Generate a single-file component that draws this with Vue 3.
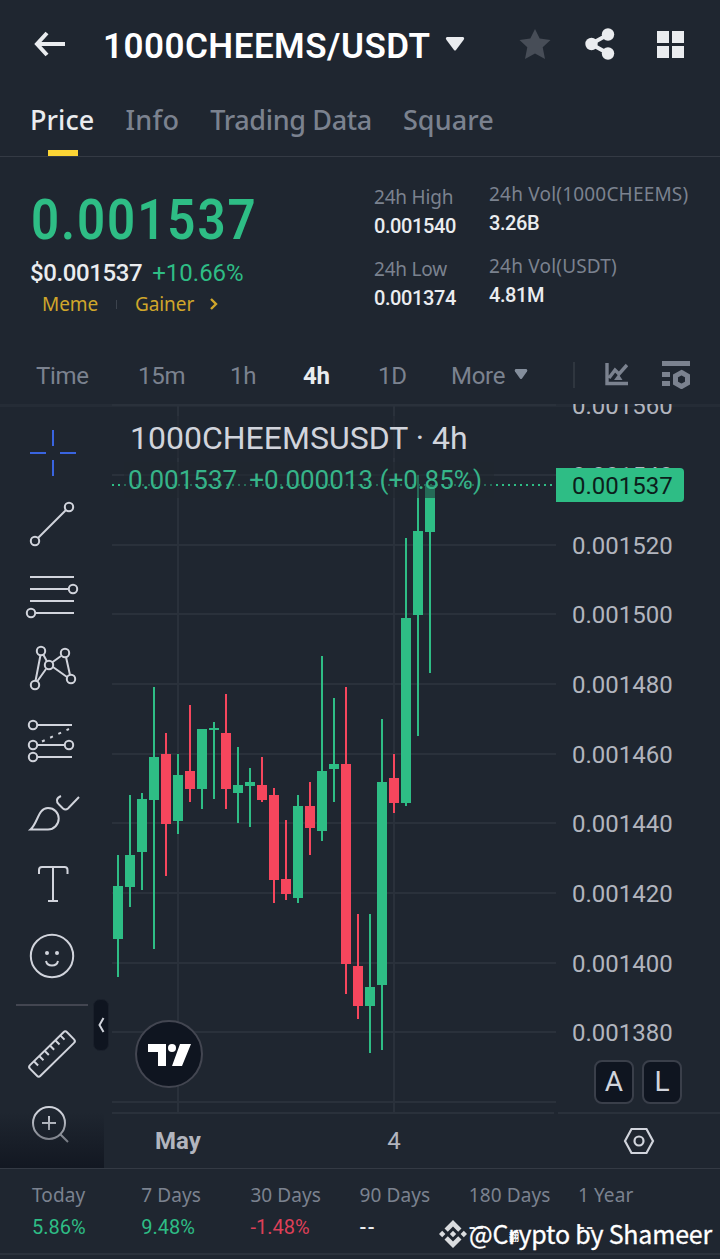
<script setup>
const tabs = ['Price', 'Info', 'Trading Data', 'Square']
const intervals = ['Time', '15m', '1h', '4h', '1D']

const stats = [
  { label: '24h High', value: '0.001540' },
  { label: '24h Vol(1000CHEEMS)', value: '3.26B' },
  { label: '24h Low', value: '0.001374' },
  { label: '24h Vol(USDT)', value: '4.81M' },
]

const performance = [
  { label: 'Today', value: '5.86%', tone: 'up' },
  { label: '7 Days', value: '9.48%', tone: 'up' },
  { label: '30 Days', value: '-1.48%', tone: 'down' },
  { label: '90 Days', value: '--', tone: 'flat' },
  { label: '180 Days', value: '--', tone: 'flat' },
  { label: '1 Year', value: '--', tone: 'flat' },
]

const priceLines = [
  { y: 1, label: '0.001560' },
  { y: 71, label: '0.001540' },
  { y: 141, label: '0.001520' },
  { y: 210, label: '0.001500' },
  { y: 280, label: '0.001480' },
  { y: 350, label: '0.001460' },
  { y: 419, label: '0.001440' },
  { y: 489, label: '0.001420' },
  { y: 559, label: '0.001400' },
  { y: 628, label: '0.001380' },
  { y: 698, label: '' },
]

// [rising, wick top, body top, body bottom, wick bottom]
const candles = [
  [1, 451, 482, 535, 573],
  [1, 391, 451, 483, 503],
  [1, 389, 395, 448, 486],
  [1, 283, 353, 396, 545],
  [0, 329, 350, 420, 472],
  [1, 350, 371, 417, 430],
  [0, 301, 367, 385, 398],
  [1, 325, 325, 385, 405],
  [1, 318, 324, 326, 395],
  [0, 290, 329, 385, 405],
  [1, 343, 381, 389, 419],
  [1, 364, 378, 382, 423],
  [0, 353, 381, 396, 398],
  [0, 384, 391, 476, 499],
  [0, 416, 475, 490, 496],
  [1, 391, 402, 494, 499],
  [0, 378, 402, 424, 451],
  [1, 252, 367, 427, 437],
  [1, 294, 360, 365, 398],
  [0, 283, 360, 560, 590],
  [0, 510, 562, 602, 615],
  [1, 510, 583, 602, 649],
  [1, 315, 378, 581, 646],
  [0, 350, 374, 399, 409],
  [1, 134, 214, 399, 402],
  [1, 71, 127, 211, 332],
  [1, 81, 81, 128, 269],
].map(([up, high, top, bottom, low], i) => ({
  x: 14 + i * 12,
  color: up ? '#2ebd85' : '#f6465d',
  high,
  top,
  bottom,
  low,
}))
</script>

<template>
  <div class="screen">
    <header class="header">
      <svg class="back" width="32" height="26" viewBox="0 0 32 26">
        <path d="M31 13H4M13 2L3 13l10 11" fill="none" stroke="#eaecef" stroke-width="4" />
      </svg>
      <h1 class="pair">1000CHEEMS/USDT</h1>
      <svg class="caret" width="20" height="14" viewBox="0 0 20 14">
        <path d="M2 0h16q2 1 .5 3L11 13q-1 1-2 0L1.500 3Q0 1 2 0z" fill="#eaecef" />
      </svg>
      <svg class="star" width="32" height="32" viewBox="0 0 32 32">
        <path d="M16 1l4.700 9.600 10.800 1.300-7.800 7.400 2.300 11.700-10-5.500-10 5.500 2.300-11.700L.5 11.900l10.800-1.300z" fill="#474d57" />
      </svg>
      <svg class="share" width="30" height="32" viewBox="0 0 30 32">
        <path d="M24 6L6 16l18 10" fill="none" stroke="#eaecef" stroke-width="4" />
        <circle cx="6.500" cy="16" r="6.200" fill="#eaecef" />
        <circle cx="23" cy="6.500" r="6.200" fill="#eaecef" />
        <circle cx="23" cy="25.500" r="6.200" fill="#eaecef" />
      </svg>
      <svg class="apps" width="27" height="27" viewBox="0 0 27 27" fill="#eaecef">
        <path d="M0 0h12v12H0zM15 0h12v12H15zM0 15h12v12H0zM15 15h12v12H15z" />
      </svg>
    </header>

    <nav class="tabs">
      <span v-for="(tab, i) in tabs" :key="tab" class="tab" :class="{ active: i === 0 }">{{ tab }}</span>
    </nav>

    <section class="summary">
      <div class="quote">
        <div class="last">0.001537</div>
        <div class="fiat">
          <span>$0.001537</span>
          <span class="change">+10.66%</span>
        </div>
        <div class="tags">
          <span class="meme">Meme</span>
          <i class="tag-divider"></i>
          <span>Gainer</span>
          <svg width="8" height="12" viewBox="0 0 8 12">
            <path d="M1 1l5 5-5 5" fill="none" stroke="#d0a62b" stroke-width="2.400" />
          </svg>
        </div>
      </div>
      <dl class="stats">
        <div v-for="stat in stats" :key="stat.label" class="stat">
          <dt>{{ stat.label }}</dt>
          <dd>{{ stat.value }}</dd>
        </div>
      </dl>
    </section>

    <nav class="intervals">
      <span v-for="item in intervals" :key="item" :class="{ active: item === '4h' }">{{ item }}</span>
      <span class="more">
        More
        <svg width="14" height="11" viewBox="0 0 14 11">
          <path d="M1.500 0h11q1.500 1 .5 2.500L8 9.500q-1 1.200-2 0l-5-7Q0 1 1.500 0z" fill="#848e9c" />
        </svg>
      </span>
      <i class="bar"></i>
      <svg class="indicator" width="23" height="23" viewBox="0 0 23 23">
        <path d="M2 0v20.500h21M4 15l6-8 4 4 8-9" fill="none" stroke="#7b828f" stroke-width="3.400" />
        <path d="M9 17l4.500-6 4 6z" fill="#7b828f" />
      </svg>
      <svg class="settings" width="29" height="29" viewBox="0 0 29 29">
        <path d="M0 1h28v5H0zM0 12h8v5H0zM0 21h8v5H0z" fill="#7b828f" />
        <path d="M19.500 12.500l6 3.400v7.200l-6 3.400-6-3.400v-7.200z" fill="none" stroke="#7b828f" stroke-width="5" />
      </svg>
    </nav>

    <main class="workspace">
      <aside class="tools">
        <svg viewBox="0 0 104 72" class="cross">
          <path d="M53 13v16M53 43v16M30 36h16M60 36h16" />
        </svg>
        <svg viewBox="0 0 104 72">
          <path d="M38 49l28-28" />
          <circle cx="69" cy="18" r="4.200" />
          <circle cx="35" cy="52" r="4.200" />
        </svg>
        <svg viewBox="0 0 104 72">
          <path d="M30 16h44M30 28h38.500M30 40h44M36 52h38" />
          <circle cx="73" cy="28" r="4.200" />
          <circle cx="31" cy="52" r="4.200" />
        </svg>
        <svg viewBox="0 0 104 72">
          <path d="M40.500 22l-5 26M43.500 22l3.500 6.500M52 29.500l9-6.500M66 24l4 18M53 34l14 10M46 36l-8.500 12" />
          <circle cx="41" cy="18" r="4.200" />
          <circle cx="65" cy="20" r="4.200" />
          <circle cx="49" cy="32" r="4.200" />
          <circle cx="71" cy="46" r="4.200" />
          <circle cx="35" cy="52" r="4.200" />
        </svg>
        <svg viewBox="0 0 104 72">
          <path d="M38 20h34M38 40h27M38 52h34" />
          <path d="M42 36.500l27-12.500" stroke-dasharray="3 6" />
          <circle cx="33" cy="20" r="4.200" />
          <circle cx="33" cy="40" r="4.200" />
          <circle cx="69" cy="40" r="4.200" />
          <circle cx="33" cy="52" r="4.200" />
        </svg>
        <svg viewBox="0 0 104 72">
          <path d="M30.500 52.500C38 46 38 31 48 31c6.500 0 10.700 5 10.700 10.500 0 6-4.700 11-10.700 11z" />
          <path d="M61 19c-5 2-5 6-2 8.500l4 4q2.500 2 5 0L79 20" />
        </svg>
        <svg viewBox="0 0 104 72">
          <path d="M39 25v-4q0-3 3-3h22.500q3 0 3 3v4M53 18v34M48 52h10" />
        </svg>
        <svg viewBox="0 0 104 72">
          <circle cx="52" cy="35" r="21.200" />
          <path d="M46 40q1 4.500 6 4.500t6-4.500" />
          <circle class="dot" cx="47" cy="32" r="2" />
          <circle class="dot" cx="57" cy="32" r="2" />
        </svg>
        <i class="tool-divider"></i>
        <svg viewBox="0 0 104 72">
          <g transform="translate(52 37) rotate(-44.500)">
            <rect x="-26" y="-7.500" width="52" height="15" rx="2.500" />
            <path d="M-18-7.500v6M-10.500-7.500v6M-3-7.500v6M4.500-7.500v6M12-7.500v6M19-7.500v6" />
          </g>
        </svg>
        <svg viewBox="0 0 104 72">
          <circle cx="49" cy="34" r="16" />
          <path d="M42 34h14M49 27v14M60 45l8 8" />
        </svg>
        <div class="tools-fade"></div>
        <button class="collapse">
          <svg width="7" height="16" viewBox="0 0 7 16">
            <path d="M5.500 1L1.500 8l4 7" fill="none" stroke="#d1d4dc" stroke-width="2" />
          </svg>
        </button>
      </aside>

      <div class="chart">
        <svg class="plot" width="616" height="764" viewBox="0 0 616 764">
          <g class="grid">
            <path v-for="line in priceLines" :key="line.y" :d="`M8 ${line.y}H452`" />
            <path d="M74 0v708M290 0v708M8 709h442M454 709h162" />
          </g>
          <g class="axis">
            <text v-for="line in priceLines" :key="line.y" x="468" :y="line.y + 9">{{ line.label }}</text>
          </g>
          <path d="M8 81H452" stroke="#2ebd85" stroke-width="2" stroke-dasharray="2 4" />
          <g v-for="c in candles" :key="c.x">
            <rect :x="c.x - 1" :y="c.high" width="2" :height="c.low - c.high" :fill="c.color" />
            <rect :x="c.x - 5" :y="c.top" width="10" :height="c.bottom - c.top" :fill="c.color" />
          </g>
          <rect x="20" y="12" width="350" height="42" fill="#1f2630" opacity=".5" />
          <rect x="20" y="58" width="370" height="36" fill="#1f2630" opacity=".55" />
          <path d="M452 64h124q4 0 4 4v26q0 4-4 4H452z" fill="#2ebd85" />
          <text x="468" y="90" class="tag-price">0.001537</text>
          <text x="74" y="745" class="time major">May</text>
          <text x="290" y="745" class="time">4</text>
          <g fill="none" stroke="#d1d4dc" stroke-width="2.200">
            <path d="M521 737l6.500-12h15l6.500 12-6.500 12h-15z" />
            <circle cx="535" cy="737" r="4.500" />
          </g>
          <circle cx="65" cy="650" r="33" fill="#0f1520" stroke="#434651" stroke-width="2" />
          <g fill="#fff">
            <path d="M44 640h18v22h-8v-14H44zM76 640h11l-9 22H68z" />
            <circle cx="68" cy="644" r="4" />
          </g>
        </svg>
        <div class="legend">
          <div class="symbol">1000CHEEMSUSDT · 4h</div>
          <div class="move"><span>0.001537</span><span>+0.000013 (+0.85%)</span></div>
        </div>
        <div class="scale-modes">
          <button>A</button>
          <button>L</button>
        </div>
      </div>
    </main>

    <footer class="performance">
      <div v-for="p in performance" :key="p.label" class="period">
        <span class="period-label">{{ p.label }}</span>
        <span :class="p.tone">{{ p.value }}</span>
      </div>
    </footer>

    <div class="watermark">
      <svg width="28" height="28" viewBox="0 0 28 28" fill="#dadcdf">
        <path d="M14 0l8.500 8.500-3.300 3.300L14 6.600l-5.200 5.200-3.300-3.300zM14 28l8.500-8.500-3.300-3.300L14 21.400l-5.200-5.200-3.300 3.300zM14 10.800l3.200 3.200-3.200 3.200-3.200-3.200zM3.200 10.800L6.400 14l-3.200 3.200L0 14zM24.800 10.800L28 14l-3.200 3.200-3.200-3.200z" />
      </svg>
      <span class="handle">@Crypto by Shameer</span>
      <b class="seal">翻</b>
    </div>
  </div>
</template>

<style>
body {
  background: #1f2630;
}
</style>

<style scoped>
.screen {
  position: relative;
  width: 720px;
  height: 1259px;
  overflow: hidden;
  background: #1f2630;
  color: #eaecef;
  font-family: Roboto, "Liberation Sans", sans-serif;
}

.header {
  display: flex;
  align-items: center;
  height: 88px;
  padding-left: 34px;
}

.pair {
  width: 325px;
  margin: 5px 0 0 37px;
  font-size: 35px;
  font-weight: 600;
  letter-spacing: 0.5px;
  line-height: 40px;
  color: #fff;
  white-space: nowrap;
}

.caret {
  margin-left: 17px;
}

.star {
  margin-left: 54px;
}

.share {
  margin-left: 34px;
}

.apps {
  margin-left: 42px;
}

.tabs {
  display: flex;
  gap: 31px;
  height: 68px;
  padding-left: 30px;
  border-bottom: 1px solid #343a44;
  font-family: "Noto Sans", sans-serif;
  font-size: 27px;
  line-height: 64px;
  color: #7b828f;
}

.tab {
  position: relative;
  font-weight: 500;
  letter-spacing: 0.1px;
  white-space: nowrap;
}

.tab:nth-child(2) {
  letter-spacing: 0.3px;
}

.tab:nth-child(3) {
  letter-spacing: -0.35px;
}

.tab.active {
  color: #eaecef;
}

.tab.active::after {
  content: "";
  position: absolute;
  left: 18px;
  bottom: 0;
  width: 30px;
  height: 6px;
  background: #fcd535;
}

.summary {
  display: flex;
  height: 188px;
}

.quote {
  width: 374px;
  box-sizing: border-box;
  padding: 33px 0 0 30px;
}

.last {
  margin-left: 1px;
  font-size: 56px;
  font-weight: 600;
  letter-spacing: 2.200px;
  line-height: 60px;
  color: #2ebd85;
  transform: scaleX(0.88);
  transform-origin: left;
}

.fiat {
  display: flex;
  gap: 10px;
  margin-top: 9px;
  font-size: 24px;
  font-weight: 500;
  line-height: 28px;
}

.fiat span:first-child {
  letter-spacing: -0.4px;
}

.change {
  color: #2ebd85;
  font-weight: 400;
}

.tags {
  display: flex;
  align-items: center;
  margin: 3px 0 0 12px;
  font-family: "Noto Sans", sans-serif;
  font-size: 19px;
  letter-spacing: -0.1px;
  line-height: 28px;
  color: #d0a62b;
}

.tag-divider {
  width: 1px;
  height: 9px;
  margin: 0 18px;
  background: #3c434d;
}

.tags svg {
  margin-left: 16px;
}

.stats {
  display: grid;
  grid-template-columns: 115px 1fr;
  grid-auto-rows: 72px;
  flex: 1;
  margin: 0;
  padding-top: 24px;
}

.stat:nth-child(odd) {
  padding-top: 3px;
}

.stat dt {
  font-family: "Noto Sans", sans-serif;
  font-size: 19px;
  letter-spacing: 0.2px;
  line-height: 26px;
  color: #7b828f;
  white-space: nowrap;
}

.stat:nth-child(odd) dt {
  letter-spacing: -0.2px;
}

.stat dd {
  margin: 0;
  padding-top: 3px;
  font-size: 20px;
  font-weight: 500;
  letter-spacing: -0.4px;
  line-height: 26px;
}

.intervals {
  display: grid;
  grid-template-columns: 102px 92px 73px 75px 73px 122px 32px 57px 1fr;
  align-items: center;
  box-sizing: border-box;
  height: 59px;
  padding: 3px 0 0 36px;
  font-size: 24px;
  letter-spacing: -0.3px;
  color: #7b828f;
}

.intervals .active {
  color: #eaecef;
  font-weight: 700;
}

.more {
  display: flex;
  gap: 9px;
}

.more svg {
  margin-top: 7px;
}

.bar {
  width: 2px;
  height: 26px;
  margin-top: -3px;
  background: #2f363f;
}

.indicator,
.settings {
  margin-top: -3px;
}

.workspace {
  display: flex;
  height: 764px;
  border-bottom: 1px solid #343a44;
}

.tools {
  position: relative;
  display: flex;
  flex-direction: column;
  box-sizing: border-box;
  width: 104px;
  padding-top: 13px;
  box-shadow: inset 0 3px #252c36;
}

.tools > svg {
  width: 104px;
  height: 72px;
  fill: none;
  stroke: #d1d4dc;
  stroke-width: 2;
}

.tools > .cross {
  stroke: #3964e0;
}

.tools .dot {
  fill: #d1d4dc;
  stroke: none;
}

.tool-divider {
  width: 72px;
  height: 2px;
  margin: 11px 16px;
  background: #434651;
}

.tools-fade {
  position: absolute;
  left: 0;
  bottom: 0;
  width: 104px;
  height: 56px;
  background: linear-gradient(rgba(19, 24, 34, 0), rgba(17, 22, 32, 0.9));
}

.collapse {
  position: absolute;
  top: 595px;
  left: 93px;
  z-index: 1;
  display: flex;
  align-items: center;
  justify-content: center;
  width: 16px;
  height: 52px;
  padding: 0;
  border: 1px solid #1a202b;
  border-radius: 7px;
  background: #0f1520;
}

.chart {
  position: relative;
  width: 616px;
  overflow: hidden;
  box-shadow: inset 0 3px #252c36;
}

.plot {
  display: block;
}

.grid path {
  fill: none;
  stroke: #2a313b;
  stroke-width: 2;
}

.axis text,
.time {
  font-size: 24px;
  fill: #b2b5be;
}

.time {
  text-anchor: middle;
}

.time.major {
  font-weight: 700;
}

.tag-price {
  font-size: 24px;
  fill: #0c1f1c;
}

.legend {
  position: absolute;
  top: 14px;
  left: 24px;
  white-space: nowrap;
}

.symbol {
  margin-left: 2px;
  font-size: 32px;
  line-height: 40px;
  color: #d1d4dc;
}

.move {
  display: flex;
  gap: 12px;
  margin-top: 6px;
  font-size: 26px;
  line-height: 32px;
  color: #36b489;
}

.scale-modes {
  position: absolute;
  top: 656px;
  left: 490px;
  display: flex;
  gap: 8px;
}

.scale-modes button {
  width: 40px;
  height: 44px;
  padding: 0 0 2px;
  border: 2px solid #3a3f4a;
  border-radius: 8px;
  background: #0f1520;
  color: #d1d4dc;
  font: 28px Roboto, sans-serif;
}

.performance {
  display: flex;
  box-sizing: border-box;
  height: 86px;
  padding: 13px 0 0 32px;
  border-bottom: 2px solid #2b323c;
}

.period {
  display: flex;
  flex-direction: column;
  gap: 6px;
  width: 109.200px;
  font-size: 20px;
  line-height: 26px;
}

.period-label {
  font-family: "Noto Sans", sans-serif;
  font-size: 19px;
  letter-spacing: 0.1px;
  color: #7b828f;
}

.up {
  color: #2ebd85;
}

.down {
  color: #dd4058;
}

.flat {
  font-weight: 500;
  letter-spacing: 1.500px;
}

.watermark {
  position: absolute;
  top: 1217px;
  left: 439px;
  display: flex;
  align-items: center;
  gap: 2px;
  font-family: "Noto Sans CJK SC", sans-serif;
  font-size: 25px;
  line-height: 36px;
  color: #fff;
  white-space: nowrap;
}

.handle {
  margin-top: -2px;
  letter-spacing: -0.2px;
  -webkit-text-stroke: 0.3px #fff;
}

.seal {
  position: absolute;
  top: 13px;
  left: 70px;
  font-size: 10px;
  line-height: 14px;
}
</style>
